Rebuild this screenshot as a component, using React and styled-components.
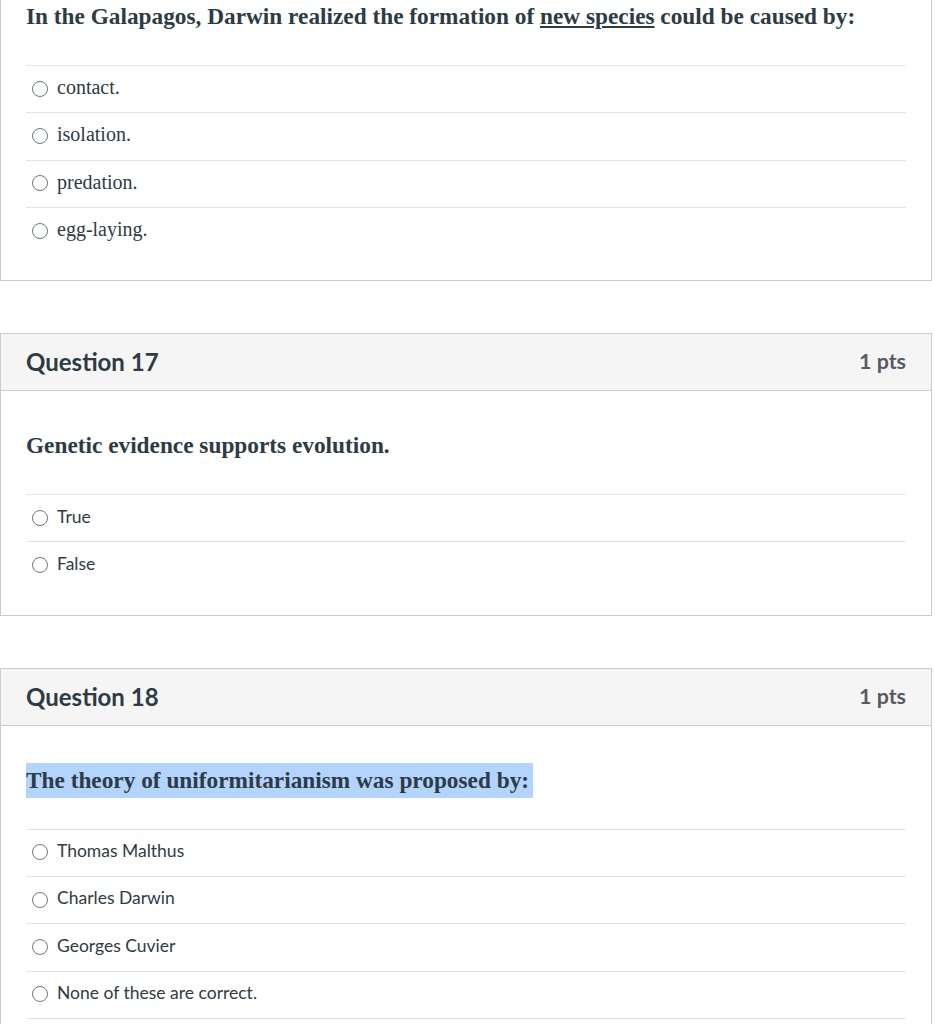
import React from 'react';
import styled, { createGlobalStyle } from 'styled-components';

const GlobalStyle = createGlobalStyle`
  html, body {
    margin: 0;
    padding: 0;
    background: #fff;
    overflow: hidden;
  }
`;

const Page = styled.div`
  display: flex;
  flex-direction: column;
  gap: 52px;
  width: 932px;
  margin-top: -39px;
`;

const Card = styled.section`
  border: 1px solid #c7cdd1;
  background: #fff;
  display: flex;
  flex-direction: column;
`;

const Header = styled.header`
  display: flex;
  align-items: center;
  justify-content: space-between;
  height: 56px;
  padding: 0 25px;
  background: #f5f5f5;
  border-bottom: 1px solid #c7cdd1;
`;

const Title = styled.h2`
  margin: 0;
  font: 700 24px/1 'Lato', sans-serif;
  color: #2d3b45;
`;

const Points = styled.span`
  font: 700 21.4px/1 'Lato', sans-serif;
  color: #555c61;
`;

const Body = styled.div`
  padding: 37px 25px 26px;
`;

const Prompt = styled.p`
  margin: 0 0 31px;
  font: 700 23.3px/35px 'Liberation Serif', 'Times New Roman', serif;
  color: #2d3b45;
`;

const Highlight = styled.span`
  display: inline-block;
  background: #b3d4fc;
  line-height: 35px;
  padding-right: 4px;
`;

const Underlined = styled.span`
  text-decoration: underline;
  text-underline-offset: 2px;
`;

const Answers = styled.ul`
  list-style: none;
  margin: 0;
  padding: 0;
  border-bottom: ${p => (p.$closed ? '1px solid #e2e4e6' : 'none')};
`;

const Answer = styled.li`
  box-sizing: border-box;
  display: flex;
  align-items: center;
  gap: 9px;
  height: 47.3px;
  padding: 0 0 4px 6px;
  border-top: 1px solid #e2e4e6;
  font: ${p => (p.$serif
    ? "400 20px/1 'Liberation Serif', 'Times New Roman', serif"
    : "400 17.5px/1 'Lato', sans-serif")};
  color: #2d3b45;
`;

const Radio = styled.span`
  flex: none;
  width: 14px;
  height: 14px;
  margin-top: 3px;
  border: 1px solid #6b7780;
  border-radius: 50%;
  background: #fff;
`;

const questions = [
  {
    prompt: (
      <>
        In the Galapagos, Darwin realized the formation of <Underlined>new species</Underlined> could be caused by:
      </>
    ),
    serif: true,
    answers: ['contact.', 'isolation.', 'predation.', 'egg-laying.'],
  },
  {
    number: 17,
    prompt: 'Genetic evidence supports evolution.',
    answers: ['True', 'False'],
  },
  {
    number: 18,
    prompt: <Highlight>The theory of uniformitarianism was proposed by:</Highlight>,
    answers: ['Thomas Malthus', 'Charles Darwin', 'Georges Cuvier', 'None of these are correct.'],
    closed: true,
  },
];

const App = () => (
  <>
    <GlobalStyle />
    <Page>
      {questions.map((q, i) => (
        <Card key={i}>
          {q.number && (
            <Header>
              <Title>Question {q.number}</Title>
              <Points>1 pts</Points>
            </Header>
          )}
          <Body>
            <Prompt>{q.prompt}</Prompt>
            <Answers $closed={q.closed}>
              {q.answers.map(a => (
                <Answer key={a} $serif={q.serif}>
                  <Radio />
                  {a}
                </Answer>
              ))}
            </Answers>
          </Body>
        </Card>
      ))}
    </Page>
  </>
);

export default App;
